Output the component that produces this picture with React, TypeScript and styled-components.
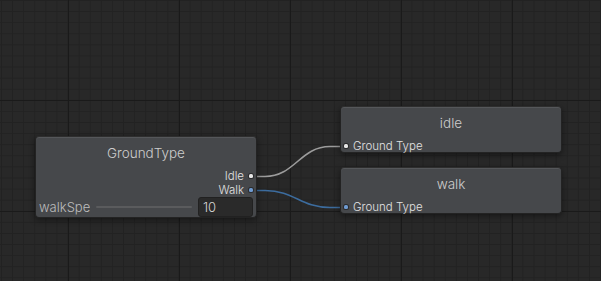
import styled, { createGlobalStyle } from "styled-components";

const GlobalStyle = createGlobalStyle`
  html, body {
    margin: 0;
    padding: 0;
    background: #282828;
  }
  body {
    font-family: Inter, "Noto Sans", sans-serif;
  }
`;

const Canvas = styled.div`
  position: relative;
  width: 601px;
  height: 281px;
  overflow: hidden;
  background-color: #282828;
  background-image:
    linear-gradient(to right, #1a1a1a 1px, transparent 1px),
    linear-gradient(to bottom, #1a1a1a 1px, transparent 1px),
    linear-gradient(to right, #222222 1px, transparent 1px),
    linear-gradient(to bottom, #222222 1px, transparent 1px);
  background-size: 111px 111px, 111px 111px, 11.1px 11.1px, 11.1px 11.1px;
  background-position: 68px 100px, 68px 100px, 1px 0px, 1px 0px;
`;

const Edges = styled.svg`
  position: absolute;
  inset: 0;
  pointer-events: none;
`;

const Node = styled.div<{ $x: number; $y: number }>`
  position: absolute;
  left: ${(p) => p.$x}px;
  top: ${(p) => p.$y}px;
  width: 222px;
  box-sizing: border-box;
  display: flex;
  flex-direction: column;
  background: #46484b;
  border: 1px solid #232323;
  border-top-color: #2e2e2e;
  border-radius: 4px;
  box-shadow: 0 2px 6px rgba(0, 0, 0, 0.45), inset 0 1px 0 #55575a;
`;

const Title = styled.div`
  height: 32px;
  display: flex;
  align-items: center;
  justify-content: center;
  font-size: 13.5px;
  font-weight: 350;
  color: #cdcdcd;
`;

const OutRow = styled.div`
  height: 14px;
  display: flex;
  align-items: center;
  justify-content: flex-end;
  gap: 5px;
  padding-right: 3px;
  font-size: 11.5px;
  font-weight: 350;
  color: #e2e2e2;
`;

const InRow = styled.div`
  height: 13px;
  display: flex;
  align-items: center;
  gap: 5px;
  padding-left: 3px;
  font-size: 11.5px;
  font-weight: 350;
  color: #e2e2e2;
`;

const Dot = styled.span<{ $color: string }>`
  width: 4px;
  height: 4px;
  border-radius: 1.5px;
  background: ${(p) => p.$color};
  box-shadow: 0 0 0 1px #2b2c2e;
  flex: none;
`;

const FieldRow = styled.div`
  height: 20px;
  display: flex;
  align-items: center;
  padding: 0 3px;
`;

const FieldLabel = styled.div`
  width: 51px;
  margin-right: 2px;
  overflow: hidden;
  white-space: nowrap;
  font-size: 13px;
  font-weight: 350;
  color: #bdbdbd;
  flex: none;
`;

const Slider = styled.div`
  flex: 1;
  height: 2px;
  margin: 0 6px 0 4px;
  background: #5a5b5d;
  border-radius: 1px;
`;

const NumberBox = styled.div`
  width: 55px;
  height: 20px;
  box-sizing: border-box;
  display: flex;
  align-items: center;
  padding-left: 4px;
  background: #2a2a2a;
  border: 1px solid #212121;
  border-radius: 3px;
  font-size: 13px;
  font-weight: 350;
  color: #d4d4d4;
`;

const idleEdge = "M253 176.5 L265 176.5 C295 176.5 300 146.5 330 146.5 L343 146.5";
const walkEdge = "M253 190.5 L265 190.5 C295 190.5 300 207.5 330 207.5 L343 207.5";

const StateNode = ({ x, y, name, color }: { x: number; y: number; name: string; color: string }) => (
  <Node $x={x} $y={y}>
    <Title>{name}</Title>
    <InRow>
      <Dot $color={color} />
      Ground Type
    </InRow>
  </Node>
);

export default function App() {
  return (
    <>
      <GlobalStyle />
      <Canvas>
        <Edges width="601" height="281" viewBox="0 0 601 281">
          <path d={idleEdge} fill="none" stroke="#9c9c9c" strokeWidth="1.6" />
          <path d={walkEdge} fill="none" stroke="#3c6c9e" strokeWidth="1.6" />
        </Edges>
        <Node $x={35} $y={136}>
          <Title>GroundType</Title>
          <OutRow>
            Idle
            <Dot $color="#e6e6e6" />
          </OutRow>
          <OutRow>
            Walk
            <Dot $color="#6e9ad0" />
          </OutRow>
          <FieldRow>
            <FieldLabel>walkSpeed</FieldLabel>
            <Slider />
            <NumberBox>10</NumberBox>
          </FieldRow>
        </Node>
        <StateNode x={340} y={106} name="idle" color="#e6e6e6" />
        <StateNode x={340} y={167} name="walk" color="#6e9ad0" />
      </Canvas>
    </>
  );
}
